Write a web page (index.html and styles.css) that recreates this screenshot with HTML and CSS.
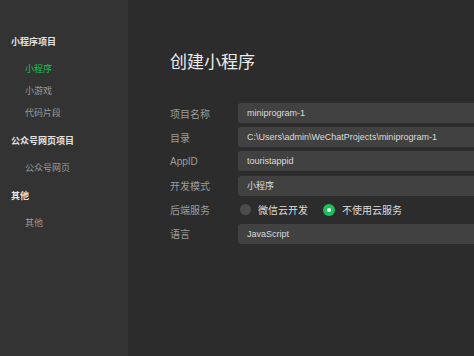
FILE: index.html
```html
<!DOCTYPE html>
<html lang="zh-CN">
<head>
    <meta charset="UTF-8">
    <title>创建小程序</title>
    <link rel="stylesheet" href="styles.css">
</head>
<body>
    <aside class="sidebar">
        <div class="group">
            <div class="group-title">小程序项目</div>
            <div class="item active">小程序</div>
            <div class="item">小游戏</div>
            <div class="item">代码片段</div>
        </div>
        <div class="group">
            <div class="group-title">公众号网页项目</div>
            <div class="item">公众号网页</div>
        </div>
        <div class="group">
            <div class="group-title">其他</div>
            <div class="item">其他</div>
        </div>
    </aside>

    <main class="main">
        <h1>创建小程序</h1>
        <div class="form">
            <div class="row">
                <label>项目名称</label>
                <div class="field">miniprogram-1</div>
            </div>
            <div class="row">
                <label>目录</label>
                <div class="field">C:\Users\admin\WeChatProjects\miniprogram-1</div>
            </div>
            <div class="row">
                <label>AppID</label>
                <div class="field">touristappid</div>
            </div>
            <div class="row">
                <label>开发模式</label>
                <div class="field">小程序</div>
            </div>
            <div class="row">
                <label>后端服务</label>
                <div class="radios">
                    <span class="radio"><i class="dot"></i>微信云开发</span>
                    <span class="radio"><i class="dot checked"></i>不使用云服务</span>
                </div>
            </div>
            <div class="row">
                <label>语言</label>
                <div class="field">JavaScript</div>
            </div>
        </div>
    </main>
</body>
</html>
```

FILE: styles.css
```css
body {
    margin: 0;
    padding: 0;
    display: flex;
    width: 474px;
    height: 356px;
    overflow: hidden;
    background-color: #2c2c2c;
    font-family: "Liberation Sans", "Noto Sans CJK SC", sans-serif;
}

.sidebar {
    width: 128px;
    flex-shrink: 0;
    background-color: #333333;
    padding-top: 31px;
    box-sizing: border-box;
}

.group {
    margin-bottom: 6px;
}

.group-title {
    padding-left: 11px;
    font-size: 9px;
    line-height: 22px;
    font-weight: bold;
    color: #e2e2e2;
    margin-bottom: 5px;
}

.item {
    padding-left: 25px;
    font-size: 9px;
    line-height: 22px;
    color: #9a9a9a;
}

.item.active {
    color: #1dc05a;
}

.main {
    flex: 1;
    padding: 51px 0 0 42px;
    min-width: 0;
    overflow: hidden;
}

h1 {
    margin: 0;
    font-size: 17px;
    font-weight: normal;
    line-height: 24px;
    color: #ececec;
}

.form {
    margin-top: 28px;
    display: flex;
    flex-direction: column;
    gap: 4.2px;
}

.row {
    display: flex;
    align-items: center;
    height: 20px;
}

.row label {
    width: 68px;
    flex-shrink: 0;
    font-size: 10px;
    color: #9c9c9c;
}

.field {
    flex: 1;
    height: 20px;
    line-height: 20px;
    background-color: #414141;
    border-radius: 3px 0 0 3px;
    padding-left: 9px;
    font-size: 9px;
    color: #dcdcdc;
    white-space: nowrap;
}

.radios {
    display: flex;
    align-items: center;
    padding-left: 2px;
}

.radio {
    display: flex;
    align-items: center;
    font-size: 10px;
    color: #dcdcdc;
    margin-right: 15px;
}

.dot {
    width: 11px;
    height: 11px;
    border-radius: 50%;
    background-color: #4c4c4c;
    margin-right: 7px;
    position: relative;
}

.dot.checked {
    width: 12px;
    height: 12px;
    background-color: #1dc05a;
}

.dot.checked::after {
    content: "";
    position: absolute;
    top: 4px;
    left: 4px;
    width: 4px;
    height: 4px;
    border-radius: 50%;
    background-color: #fff;
}
```
